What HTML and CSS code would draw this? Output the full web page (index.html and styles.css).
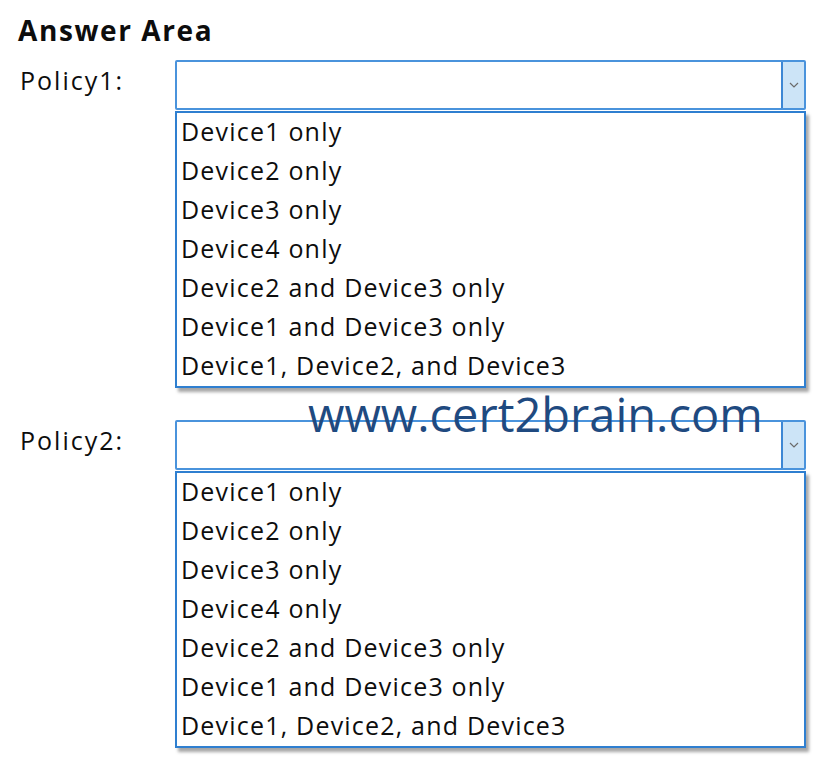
FILE: index.html
```html
<!DOCTYPE html>
<html lang="en">
<head>
    <meta charset="UTF-8">
    <meta name="viewport" content="width=device-width, initial-scale=1.0">
    <title>Answer Area</title>
    <link rel="stylesheet" href="styles.css">
</head>
<body>
    <div class="answer-area">
        <h2 class="title">Answer Area</h2>

        <div class="policy-row">
            <div class="policy-label">Policy1:</div>
            <div class="dropdown">
                <div class="select">
                    <span class="select-arrow">
                        <svg width="10" height="6" viewBox="0 0 10 6"><path d="M1 1 L5 5 L9 1" fill="none" stroke="#6b6b6b" stroke-width="1.2"/></svg>
                    </span>
                </div>
                <ul class="options">
                    <li>Device1 only</li>
                    <li>Device2 only</li>
                    <li>Device3 only</li>
                    <li>Device4 only</li>
                    <li>Device2 and Device3 only</li>
                    <li>Device1 and Device3 only</li>
                    <li>Device1, Device2, and Device3</li>
                </ul>
            </div>
        </div>

        <div class="policy-row">
            <div class="policy-label">Policy2:</div>
            <div class="dropdown">
                <div class="select">
                    <span class="select-arrow">
                        <svg width="10" height="6" viewBox="0 0 10 6"><path d="M1 1 L5 5 L9 1" fill="none" stroke="#6b6b6b" stroke-width="1.2"/></svg>
                    </span>
                </div>
                <ul class="options">
                    <li>Device1 only</li>
                    <li>Device2 only</li>
                    <li>Device3 only</li>
                    <li>Device4 only</li>
                    <li>Device2 and Device3 only</li>
                    <li>Device1 and Device3 only</li>
                    <li>Device1, Device2, and Device3</li>
                </ul>
            </div>
        </div>

        <!-- watermark sits over the second select -->
        <div class="watermark">www.cert2brain.com</div>
    </div>
</body>
</html>
```

FILE: styles.css
```css
* {
    margin: 0;
    padding: 0;
    box-sizing: border-box;
}

body {
    background: white;
    font-family: 'Open Sans', 'Liberation Sans', sans-serif;
    color: #0d0d0d;
}

.answer-area {
    position: relative;
    width: 826px;
    height: 764px;
    padding: 13px 0 0 18px;
}

.title {
    font-size: 28px;
    font-weight: 700;
    letter-spacing: 1.6px;
    line-height: 34px;
    height: 47px;
}

.policy-row {
    display: flex;
    margin-bottom: 32px;
}

.policy-label {
    width: 157px;
    padding-left: 2px;
    font-size: 25px;
    letter-spacing: 2px;
    line-height: 40px;
}

.dropdown {
    width: 631px;
}

.select {
    display: flex;
    justify-content: flex-end;
    height: 50px;
    border: 2px solid #4a93dc;
    border-radius: 2px;
    background: white;
}

.select-arrow {
    display: flex;
    align-items: center;
    justify-content: center;
    width: 23px;
    background: #cce4f7;
    border-left: 2px solid #3d87d4;
}

.options {
    list-style: none;
    margin-top: 1px;
    border: 2px solid #2f7fd0;
    background: white;
    box-shadow: 3px 4px 3px rgba(0, 0, 0, 0.35);
}

.options li {
    height: 39px;
    line-height: 37px;
    padding-left: 4px;
    font-size: 25px;
    letter-spacing: 1.2px;
    white-space: nowrap;
}

.watermark {
    position: absolute;
    left: 308px;
    top: 384px;
    font-size: 47px;
    line-height: 60px;
    color: #1f4a80;
}
```
